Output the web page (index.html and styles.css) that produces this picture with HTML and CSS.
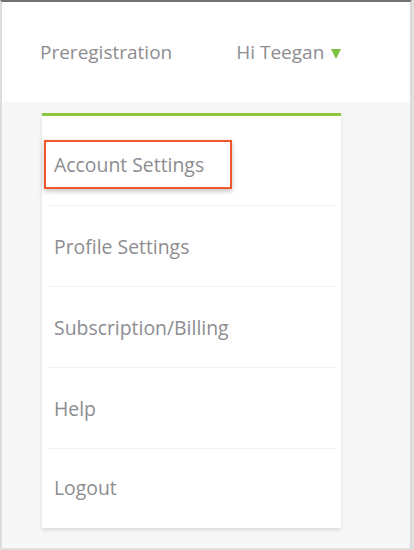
FILE: index.html
```html
<!DOCTYPE html>
<html lang="en">
<head>
	<meta charset="UTF-8">
	<title>Account menu</title>
	<link rel="stylesheet" href="styles.css">
</head>
<body>
	<div id="frame">
		<div id="header">
			<a class="nav" href="###">Preregistration</a>
			<a class="nav user" href="###">Hi Teegan <span class="caret"></span></a>
		</div>
		<div id="page">
			<ul id="menu">
				<li><a class="mark" href="###">Account Settings</a></li>
				<li><a href="###">Profile Settings</a></li>
				<li><a href="###">Subscription/Billing</a></li>
				<li><a href="###">Help</a></li>
				<li><a href="###">Logout</a></li>
			</ul>
		</div>
	</div>
</body>
</html>
```

FILE: styles.css
```css
*{
	margin: 0;
	padding: 0;
	box-sizing: border-box;
}
ul,li{
	list-style: none;
}
a{
	text-decoration: none;
	color: #8d8c90;
}
body{
	width: 414px;
	height: 550px;
	background-color: #e2dfdf;
	font-family: "Open Sans", "Noto Sans", sans-serif;
	overflow: hidden;
}
#frame{
	width: 412px;
	height: 548px;
	border-top: 2px solid #6d7277;
	border-left: 2px solid #e0dcdc;
	border-right: 2px solid #dcd8d8;
	background-color: #f7f7f7;
	display: flex;
	flex-direction: column;
}
#header{
	height: 100px;
	background-color: #fff;
	display: flex;
	align-items: center;
	padding-left: 38px;
}
.nav{
	font-size: 19px;
}
.user{
	margin-left: 64px;
	display: flex;
	align-items: center;
}
.caret{
	width: 0;
	height: 0;
	margin-left: 7px;
	margin-top: 4px;
	border-left: 5.5px solid transparent;
	border-right: 5.5px solid transparent;
	border-top: 10px solid #7dc241;
}
#page{
	flex: 1;
	padding: 11px 0 0 40px;
}
#menu{
	width: 299px;
	background-color: #fff;
	border-top: 3px solid #8cc63f;
	padding-top: 9px;
	box-shadow: 0 2px 4px rgba(0,0,0,0.12);
}
#menu li{
	height: 81px;
	margin: 0 5px;
	padding-left: 7px;
	border-bottom: 1px solid #f1f1f1;
	display: flex;
	align-items: center;
}
#menu li:last-child{
	border-bottom: none;
	height: 79px;
	padding-bottom: 3px;
}
#menu li a{
	font-size: 19.4px;
}
#menu li a.mark{
	margin-left: -10px;
	margin-top: -2px;
	height: 49px;
	width: 188px;
	padding-left: 8px;
	border: 2px solid #f0582b;
	display: flex;
	align-items: center;
	box-shadow: 0 2px 5px rgba(0,0,0,0.25);
}
```
